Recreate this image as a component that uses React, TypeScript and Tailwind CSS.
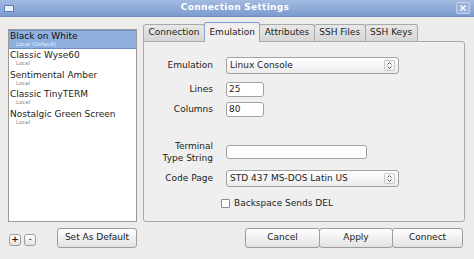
const profiles = [
  { name: 'Black on White', sub: 'Local  (Default)' },
  { name: 'Classic Wyse60', sub: 'Local' },
  { name: 'Sentimental Amber', sub: 'Local' },
  { name: 'Classic TinyTERM', sub: 'Local' },
  { name: 'Nostalgic Green Screen', sub: 'Local' },
]

const tabs = ['Connection', 'Emulation', 'Attributes', 'SSH Files', 'SSH Keys']

const Arrows = () => (
  <svg width="7" height="9" viewBox="0 0 7 9" className="text-[#555]">
    <path d="M1.5 3.5 L3.5 1.5 L5.5 3.5 M1.5 5.5 L3.5 7.5 L5.5 5.5" fill="none" stroke="currentColor" strokeWidth="1" />
  </svg>
)

const Select = ({ value }: { value: string }) => (
  <div className="flex h-[17px] w-[173px] items-center justify-between rounded-[3px] border border-[#a2a2a2] bg-gradient-to-b from-white to-[#ececec] pl-[3px] pr-[3px]">
    <span>{value}</span>
    <span className="flex h-[11px] w-[11px] items-center justify-center rounded-[2px] border border-[#c8c8c8]">
      <Arrows />
    </span>
  </div>
)

const Btn = ({ label, className }: { label: string; className: string }) => (
  <div
    className={`flex items-center justify-center rounded-[3px] border border-[#9c9c9c] bg-gradient-to-b from-white to-[#e2e2e2] ${className}`}
  >
    {label}
  </div>
)

export default function App() {
  return (
    <div
      className="flex h-[259px] w-[474px] flex-col overflow-hidden bg-[#edeceb] text-[9px] text-[#1c1c1c]"
      style={{ fontFamily: '"DejaVu Sans", sans-serif' }}
    >
      {/* title bar */}
      <div className="flex h-[17px] shrink-0 items-center justify-between border-b border-[#6d8cbd] bg-gradient-to-b from-[#a3bbe1] to-[#7b9bcf] px-[4px]">
        <div className="h-[7px] w-[10px] border border-[#5f7fb3] bg-[#e8eef8]" />
        <div className="text-[9px] font-bold tracking-[0.3px] text-white">Connection Settings</div>
        <div className="flex h-[12px] w-[14px] items-center justify-center rounded-[2px] border border-[#c5d4ec] bg-[#9cb4dc]">
          <svg width="8" height="8" viewBox="0 0 8 8">
            <path d="M1.5 1.5 L6.5 6.5 M6.5 1.5 L1.5 6.5" stroke="white" strokeWidth="1.3" />
          </svg>
        </div>
      </div>

      <div className="flex gap-[6px] pl-[8px] pr-[9px]">
        {/* left column */}
        <div className="flex w-[129px] flex-col">
          <div className="mt-[12px] h-[193px] border border-[#9a9a9a] bg-white">
            {profiles.map((p, i) => (
              <div
                key={p.name}
                className={`flex h-[19.4px] flex-col justify-center pl-[1px] leading-none ${
                  i === 0 ? 'border-y border-[#6e8fc4] bg-[#8fb0df] text-[#111]' : ''
                }`}
              >
                <span className="text-[9px]">{p.name}</span>
                <span
                  className={`ml-[6px] mt-[1px] text-[5.5px] ${i === 0 ? 'text-[#e3ebf7]' : 'text-[#8a8a8a]'}`}
                >
                  {p.sub}
                </span>
              </div>
            ))}
          </div>
          <div className="mt-[6px] flex items-center">
            <Btn label="+" className="ml-[1px] mt-[3px] h-[12px] w-[12px] text-[9px] font-bold" />
            <Btn label="-" className="ml-[3px] mt-[3px] h-[12px] w-[12px] text-[9px]" />
            <Btn label="Set As Default" className="ml-[21px] h-[20px] w-[80px]" />
          </div>
        </div>

        {/* right column */}
        <div className="flex flex-1 flex-col">
          <div className="mt-[5px] flex items-end">
            {tabs.map((t) => {
              const active = t === 'Emulation'
              return (
                <div
                  key={t}
                  className={`relative -mr-px flex items-center justify-center rounded-t-[3px] border border-b-0 px-[4.5px] ${
                    active
                      ? 'z-10 -mb-px h-[20px] border-[#8ea7cf] border-t-[#7e9ccc] bg-[#efefef]'
                      : 'h-[17px] border-[#a9a9a9] bg-gradient-to-b from-[#e8e8e8] to-[#d6d6d6]'
                  }`}
                >
                  {t}
                </div>
              )
            })}
          </div>
          <div className="flex h-[181px] flex-col rounded-b-[3px] rounded-tr-[3px] border border-[#a9a9a9] bg-[#efefef] pl-[82px] pt-[15px]">
            <div className="flex items-center">
              <span className="-ml-[82px] w-[69px] text-right">Emulation</span>
              <span className="ml-[13px]"><Select value="Linux Console" /></span>
            </div>
            <div className="mt-[8px] flex items-center">
              <span className="-ml-[82px] w-[69px] text-right">Lines</span>
              <div className="ml-[13px] flex h-[15px] w-[38px] items-center rounded-[3px] border border-[#a2a2a2] bg-white pl-[2px]">25</div>
            </div>
            <div className="mt-[5px] flex items-center">
              <span className="-ml-[82px] w-[69px] text-right">Columns</span>
              <div className="ml-[13px] flex h-[15px] w-[38px] items-center rounded-[3px] border border-[#a2a2a2] bg-white pl-[2px]">80</div>
            </div>
            <div className="mt-[23px] flex items-center">
              <span className="-ml-[82px] w-[69px] text-right leading-[12px]">
                Terminal
                <br />
                Type String
              </span>
              <div className="ml-[13px] mt-[-1px] h-[14px] w-[141px] rounded-[3px] border border-[#a2a2a2] bg-white" />
            </div>
            <div className="mt-[6px] flex items-center">
              <span className="-ml-[82px] w-[69px] text-right">Code Page</span>
              <span className="ml-[13px]"><Select value="STD 437 MS-DOS Latin US" /></span>
            </div>
            <div className="mt-[10px] flex items-center">
              <div className="-ml-[5px] h-[9px] w-[9px] rounded-[1px] border border-[#8a8a8a] bg-white" />
              <span className="ml-[4px]">Backspace Sends DEL</span>
            </div>
          </div>
          <div className="mt-[6px] flex justify-end pr-[2px]">
            <Btn label="Cancel" className="h-[20px] w-[75px]" />
            <Btn label="Apply" className="-ml-px h-[20px] w-[74px]" />
            <Btn label="Connect" className="-ml-px h-[20px] w-[71px]" />
          </div>
        </div>
      </div>
    </div>
  )
}
